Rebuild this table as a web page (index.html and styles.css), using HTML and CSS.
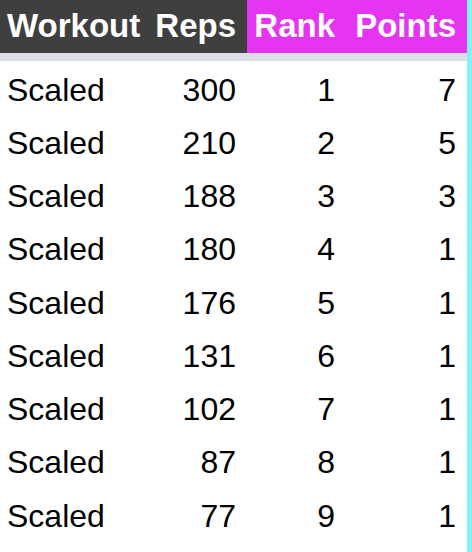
FILE: index.html
```html
<!DOCTYPE html>
<html lang="en">
<head>
<meta charset="utf-8">
<title>Leaderboard</title>
<link rel="stylesheet" href="styles.css">
</head>
<body>
<div class="frame">
<table class="board">
  <colgroup>
    <col class="c-workout"><col class="c-reps"><col class="c-rank"><col class="c-points"><col class="c-extra">
  </colgroup>
  <thead>
    <tr>
      <th class="h-dark left">Workout</th>
      <th class="h-dark">Reps</th>
      <th class="h-pink">Rank</th>
      <th class="h-pink">Points</th>
      <th class="extra"></th>
    </tr>
  </thead>
  <tbody>
    <tr><td class="left">Scaled</td><td>300</td><td>1</td><td>7</td><td class="extra"></td></tr>
    <tr><td class="left">Scaled</td><td>210</td><td>2</td><td>5</td><td class="extra"></td></tr>
    <tr><td class="left">Scaled</td><td>188</td><td>3</td><td>3</td><td class="extra"></td></tr>
    <tr><td class="left">Scaled</td><td>180</td><td>4</td><td>1</td><td class="extra"></td></tr>
    <tr><td class="left">Scaled</td><td>176</td><td>5</td><td>1</td><td class="extra"></td></tr>
    <tr><td class="left">Scaled</td><td>131</td><td>6</td><td>1</td><td class="extra"></td></tr>
    <tr><td class="left">Scaled</td><td>102</td><td>7</td><td>1</td><td class="extra"></td></tr>
    <tr><td class="left">Scaled</td><td>87</td><td>8</td><td>1</td><td class="extra"></td></tr>
    <tr><td class="left">Scaled</td><td>77</td><td>9</td><td>1</td><td class="extra"></td></tr>
    <tr><td class="left"></td><td></td><td></td><td></td><td class="extra"></td></tr>
  </tbody>
</table>
</div>
</body>
</html>
```
FILE: styles.css
```css
html, body {
  margin: 0;
  padding: 0;
  background: #ffffff;
}
.frame {
  width: 472px;
  height: 552px;
  overflow: hidden;
}
.board {
  border-collapse: collapse;
  border-spacing: 0;
  table-layout: fixed;
  width: 567px;
  font-family: "Liberation Sans", Arial, sans-serif;
  font-size: 32px;
  color: #000000;
}
.c-workout { width: 148px; }
.c-reps { width: 99px; }
.c-rank { width: 99px; }
.c-points { width: 121px; }
.c-extra { width: 100px; }

.board th {
  font-weight: bold;
  font-size: 33px;
  color: #ffffff;
  text-align: right;
  line-height: 36px;
  height: 36px;
  padding: 8px 11px 8.5px 0;
  border-bottom: 8.5px solid #dcdfe7;
  white-space: nowrap;
}
.board th.left, .board td.left {
  text-align: left;
  padding-left: 7px;
}
.h-dark { background: #3f3f3f; }
.h-pink { background: #e535f0; }
.board th.extra {
  background: #7ff3f5;
  border-bottom-color: #7ff3f5;
}
.board td {
  text-align: right;
  line-height: 37px;
  height: 37px;
  padding: 11px 11px 5.25px 0;
  white-space: nowrap;
}
.board td.extra {
  background: #7ff3f5;
}
```
